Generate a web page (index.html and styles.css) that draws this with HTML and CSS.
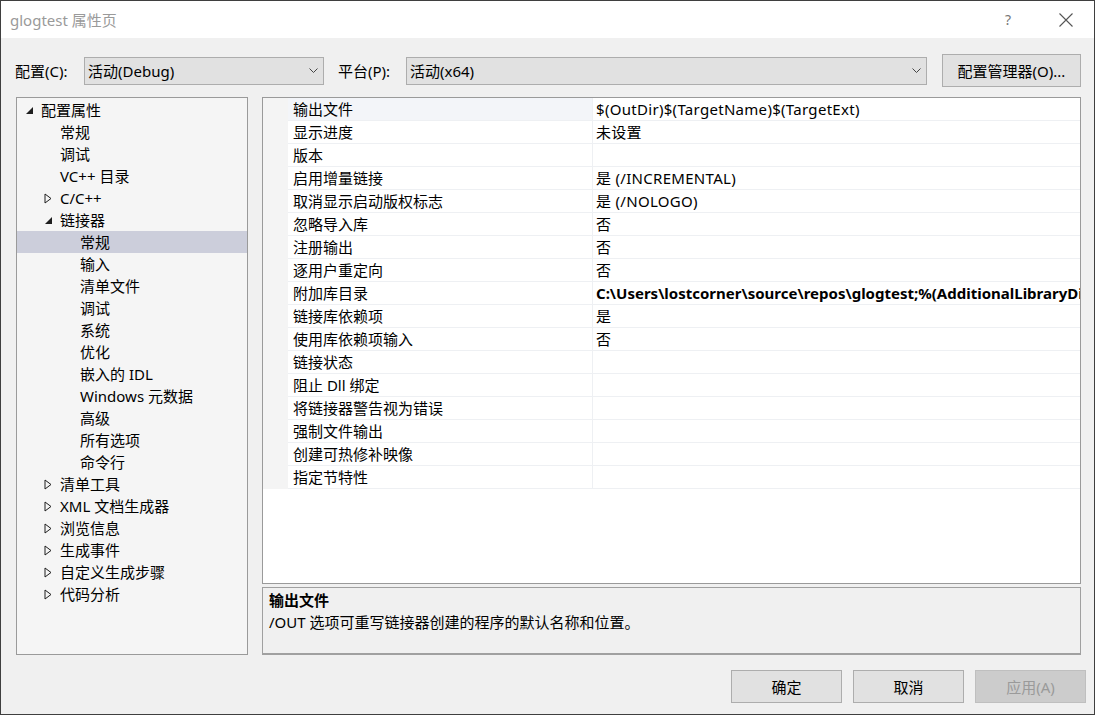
FILE: index.html
```html
<!DOCTYPE html>
<html lang="zh-CN">
<head>
<meta charset="utf-8">
<title>glogtest 属性页</title>
<link rel="stylesheet" href="styles.css">
</head>
<body>
<div class="window">
  <div class="titlebar">
    <span class="title">glogtest 属性页</span>
    <span class="help">?</span>
    <span class="close"><svg width="16" height="16" viewBox="0 0 16 16"><path d="M1.5 1.5 L14.5 14.5 M14.5 1.5 L1.5 14.5" stroke="#555" stroke-width="1.1" fill="none"/></svg></span>
  </div>

  <div class="toolbar">
    <span class="lbl lbl1">配置(C):</span>
    <div class="combo combo1"><span>活动(Debug)</span><svg class="chev" width="9" height="6" viewBox="0 0 9 6"><path d="M0.5 0.5 L4.5 4.5 L8.5 0.5" stroke="#444" stroke-width="1" fill="none"/></svg></div>
    <span class="lbl lbl2">平台(P):</span>
    <div class="combo combo2"><span>活动(x64)</span><svg class="chev" width="9" height="6" viewBox="0 0 9 6"><path d="M0.5 0.5 L4.5 4.5 L8.5 0.5" stroke="#444" stroke-width="1" fill="none"/></svg></div>
    <div class="btn mgr">配置管理器(O)...</div>
  </div>

  <div class="main">
    <div class="tree">
      <div class="node l0"><span class="tw"><svg width="9" height="9" viewBox="0 0 9 9"><polygon points="8,1 8,8 1,8" fill="#1e1e1e"/></svg></span>配置属性</div>
      <div class="node l1"><span class="tw"></span>常规</div>
      <div class="node l1"><span class="tw"></span>调试</div>
      <div class="node l1"><span class="tw"></span>VC++ 目录</div>
      <div class="node l1"><span class="tw"><svg width="9" height="11" viewBox="0 0 9 11"><polygon points="1,1 7,5.5 1,10" fill="none" stroke="#1e1e1e" stroke-width="1"/></svg></span>C/C++</div>
      <div class="node l1"><span class="tw"><svg width="9" height="9" viewBox="0 0 9 9"><polygon points="8,1 8,8 1,8" fill="#1e1e1e"/></svg></span>链接器</div>
      <div class="node l2 sel"><span class="tw"></span>常规</div>
      <div class="node l2"><span class="tw"></span>输入</div>
      <div class="node l2"><span class="tw"></span>清单文件</div>
      <div class="node l2"><span class="tw"></span>调试</div>
      <div class="node l2"><span class="tw"></span>系统</div>
      <div class="node l2"><span class="tw"></span>优化</div>
      <div class="node l2"><span class="tw"></span>嵌入的 IDL</div>
      <div class="node l2"><span class="tw"></span>Windows 元数据</div>
      <div class="node l2"><span class="tw"></span>高级</div>
      <div class="node l2"><span class="tw"></span>所有选项</div>
      <div class="node l2"><span class="tw"></span>命令行</div>
      <div class="node l1"><span class="tw"><svg width="9" height="11" viewBox="0 0 9 11"><polygon points="1,1 7,5.5 1,10" fill="none" stroke="#1e1e1e" stroke-width="1"/></svg></span>清单工具</div>
      <div class="node l1"><span class="tw"><svg width="9" height="11" viewBox="0 0 9 11"><polygon points="1,1 7,5.5 1,10" fill="none" stroke="#1e1e1e" stroke-width="1"/></svg></span>XML 文档生成器</div>
      <div class="node l1"><span class="tw"><svg width="9" height="11" viewBox="0 0 9 11"><polygon points="1,1 7,5.5 1,10" fill="none" stroke="#1e1e1e" stroke-width="1"/></svg></span>浏览信息</div>
      <div class="node l1"><span class="tw"><svg width="9" height="11" viewBox="0 0 9 11"><polygon points="1,1 7,5.5 1,10" fill="none" stroke="#1e1e1e" stroke-width="1"/></svg></span>生成事件</div>
      <div class="node l1"><span class="tw"><svg width="9" height="11" viewBox="0 0 9 11"><polygon points="1,1 7,5.5 1,10" fill="none" stroke="#1e1e1e" stroke-width="1"/></svg></span>自定义生成步骤</div>
      <div class="node l1"><span class="tw"><svg width="9" height="11" viewBox="0 0 9 11"><polygon points="1,1 7,5.5 1,10" fill="none" stroke="#1e1e1e" stroke-width="1"/></svg></span>代码分析</div>
    </div>

    <div class="right">
      <div class="grid">
        <div class="prow first"><span class="strip"></span><span class="name">输出文件</span><span class="val">$(OutDir)$(TargetName)$(TargetExt)</span></div>
        <div class="prow"><span class="strip"></span><span class="name">显示进度</span><span class="val">未设置</span></div>
        <div class="prow"><span class="strip"></span><span class="name">版本</span><span class="val"></span></div>
        <div class="prow"><span class="strip"></span><span class="name">启用增量链接</span><span class="val">是 (/INCREMENTAL)</span></div>
        <div class="prow"><span class="strip"></span><span class="name">取消显示启动版权标志</span><span class="val">是 (/NOLOGO)</span></div>
        <div class="prow"><span class="strip"></span><span class="name">忽略导入库</span><span class="val">否</span></div>
        <div class="prow"><span class="strip"></span><span class="name">注册输出</span><span class="val">否</span></div>
        <div class="prow"><span class="strip"></span><span class="name">逐用户重定向</span><span class="val">否</span></div>
        <div class="prow"><span class="strip"></span><span class="name">附加库目录</span><span class="val bold">C:\Users\lostcorner\source\repos\glogtest;%(AdditionalLibraryDirectories)</span></div>
        <div class="prow"><span class="strip"></span><span class="name">链接库依赖项</span><span class="val">是</span></div>
        <div class="prow"><span class="strip"></span><span class="name">使用库依赖项输入</span><span class="val">否</span></div>
        <div class="prow"><span class="strip"></span><span class="name">链接状态</span><span class="val"></span></div>
        <div class="prow"><span class="strip"></span><span class="name">阻止 Dll 绑定</span><span class="val"></span></div>
        <div class="prow"><span class="strip"></span><span class="name">将链接器警告视为错误</span><span class="val"></span></div>
        <div class="prow"><span class="strip"></span><span class="name">强制文件输出</span><span class="val"></span></div>
        <div class="prow"><span class="strip"></span><span class="name">创建可热修补映像</span><span class="val"></span></div>
        <div class="prow"><span class="strip"></span><span class="name">指定节特性</span><span class="val"></span></div>
      </div>
      <div class="desc">
        <div class="desc-title">输出文件</div>
        <div class="desc-text">/OUT 选项可重写链接器创建的程序的默认名称和位置。</div>
      </div>
    </div>
  </div>

  <div class="footer">
    <div class="btn fbtn">确定</div>
    <div class="btn fbtn">取消</div>
    <div class="btn fbtn disabled">应用(A)</div>
  </div>
</div>
</body>
</html>
```

FILE: styles.css
```css
* { box-sizing: border-box; }

body {
  margin: 0;
  font-family: "Noto Sans", "Noto Sans CJK SC", sans-serif;
  font-size: 15px;
  color: #000;
  background: #f0f0f0;
}

.window {
  width: 1095px;
  height: 715px;
  border: 1px solid #3f3f3f;
  background: #f0f0f0;
  display: flex;
  flex-direction: column;
  overflow: hidden;
}

.titlebar {
  height: 37px;
  flex: none;
  background: #fff;
  display: flex;
  align-items: center;
  padding-left: 9px;
}
.title { flex: 1; color: #9a9a9a; font-size: 15px; }
.help { width: 16px; color: #777; font-size: 14px; margin-right: 42px; text-align: center; }
.close { width: 16px; height: 16px; margin-right: 20px; display: flex; }

.toolbar {
  flex: none;
  height: 33px;
  margin-top: 16px;
  padding-left: 14px;
  display: flex;
  align-items: center;
}
.lbl { line-height: 28px; }
.lbl1 { width: 69px; }
.lbl2 { width: 68px; margin-left: 14px; }
.combo {
  height: 28px;
  background: #e1e1e1;
  border: 1px solid #adadad;
  display: flex;
  align-items: center;
  padding-left: 3px;
  padding-right: 5px;
}
.combo span { flex: 1; }
.combo1 { width: 240px; }
.combo2 { width: 521px; }
.chev { flex: none; }

.btn {
  background: #e1e1e1;
  border: 1px solid #adadad;
  display: flex;
  align-items: center;
  justify-content: center;
}
.mgr { width: 139px; height: 33px; margin-left: 15px; }

.main {
  flex: none;
  height: 558px;
  margin-top: 10px;
  padding-left: 15px;
  display: flex;
  gap: 14px;
}

.tree {
  width: 232px;
  height: 558px;
  background: #f5f5f5;
  border: 1px solid #9a9a9a;
  padding-top: 1px;
}
.node {
  height: 22px;
  line-height: 22px;
  display: flex;
  align-items: center;
  white-space: nowrap;
}
.node.l0 { padding-left: 8px; }
.node.l1 { padding-left: 27px; }
.node.l2 { padding-left: 47px; }
.node.sel { background: #cccedb; }
.tw { width: 16px; flex: none; display: flex; align-items: center; }

.right {
  width: 819px;
  display: flex;
  flex-direction: column;
}

.grid {
  height: 487px;
  background: #fff;
  border: 1px solid #9a9a9a;
}
.prow {
  height: 23px;
  display: flex;
  line-height: 22px;
}
.strip { width: 25px; flex: none; background: #f4f4f4; }
.name {
  width: 305px;
  flex: none;
  padding-left: 5px;
  border-right: 1px solid #eef0f3;
  border-bottom: 1px solid #eef0f3;
  white-space: nowrap;
}
.prow.first .name { background: #f3f5f9; }
.val {
  flex: 1;
  min-width: 0;
  padding-left: 3px;
  border-bottom: 1px solid #eef0f3;
  white-space: nowrap;
  overflow: hidden;
  letter-spacing: 0.3px;
}
.val.bold { font-weight: bold; letter-spacing: 0; }

.desc {
  margin-top: 3px;
  height: 68px;
  background: #f0f0f0;
  border: 1px solid #a0a0a0;
  border-bottom-width: 2px;
  padding: 1px 6px 0;
}
.desc-title { font-weight: bold; line-height: 22px; }
.desc-text { line-height: 22px; }

.footer {
  flex: none;
  margin-top: 15px;
  padding-right: 8px;
  display: flex;
  justify-content: flex-end;
  gap: 11px;
}
.fbtn { width: 111px; height: 33px; }
.fbtn.disabled { background: #cccccc; border-color: #bfbfbf; color: #9a9a9a; }
```
